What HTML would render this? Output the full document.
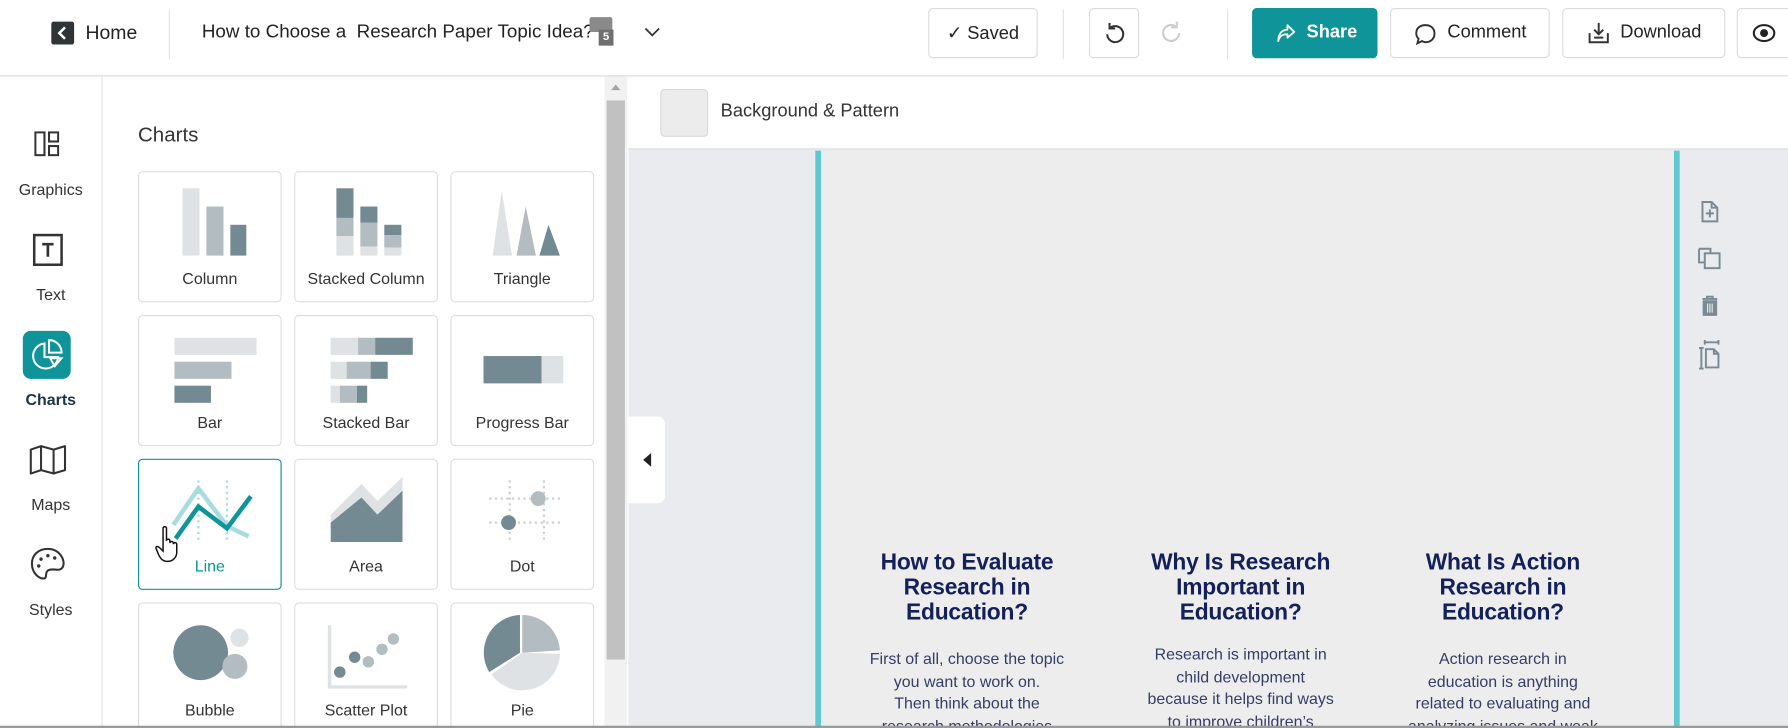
<!DOCTYPE html>
<html><head><meta charset="utf-8"><style>
*{box-sizing:border-box;margin:0;padding:0}
html,body{width:1788px;height:728px;overflow:hidden;background:#fff;font-family:"Liberation Sans",sans-serif}
#w{position:absolute;left:0;top:0;width:1568px;height:638px;transform:scale(1.14031,1.14107);transform-origin:0 0;overflow:hidden;background:#fff}
.a{position:absolute}
.btn{position:absolute;top:7px;height:44px;border:1px solid #dcdcdc;border-radius:4px;background:#fff;display:flex;align-items:center;justify-content:center;font-size:16px;color:#222;gap:8px}
.vd{position:absolute;top:8px;width:1px;height:44px;background:#e3e3e3}
.rail{position:absolute;left:0;width:89px;text-align:center;font-size:14px;color:#333}
.card{position:absolute;width:126px;height:115px;border:1px solid #dedede;border-radius:4px;background:#fff}
.card .l{position:absolute;left:0;right:0;top:85px;text-align:center;font-size:14px;color:#333}
.card svg{position:absolute;left:0;top:0}
.h{position:absolute;width:200px;text-align:center;font-size:20px;line-height:22px;font-weight:bold;color:#14205a;letter-spacing:-.2px}
.p{position:absolute;width:200px;text-align:center;font-size:14px;line-height:19.5px;color:#353c66}
</style></head><body><div id="w">
<!-- top bar -->
<div class="a" style="left:0;top:66px;width:1568px;height:1px;background:#d9d9d9"></div>
<div class="a" style="left:45px;top:19px;width:20px;height:20px;background:#2f3537;border-radius:2px"></div>
<svg class="a" style="left:45px;top:19px" width="20" height="20"><path d="M12 5 L7 10 L12 15" stroke="#fff" stroke-width="2.2" fill="none"/></svg>
<div class="a" style="left:75px;top:19px;font-size:17px;color:#222">Home</div>
<div class="vd" style="left:148px"></div>
<div class="a" style="left:177px;top:19px;font-size:16.5px;color:#222;white-space:pre">How to Choose a  Research Paper Topic Idea?</div>
<div class="a" style="left:517px;top:15px;width:20px;height:13px;background:#8a8a8a;border-radius:2px"></div>
<div class="a" style="left:525px;top:26px;width:13px;height:14px;background:#6f6f6f;color:#fff;font-size:10px;font-weight:bold;text-align:center;line-height:14px">5</div>
<svg class="a" style="left:565px;top:22px" width="14" height="12"><path d="M1 3 L7 9 L13 3" stroke="#333" stroke-width="1.6" fill="none"/></svg>
<div class="btn" style="left:814px;width:96px">✓ Saved</div>
<div class="vd" style="left:932px"></div>
<div class="btn" style="left:955px;width:44px"><svg width="22" height="22"><path d="M7 7 A7 7 0 1 1 5 12" stroke="#333" stroke-width="1.8" fill="none"/><path d="M7 2 V7 H12" stroke="#333" stroke-width="1.8" fill="none"/></svg></div>
<div class="a" style="left:1017px;top:17px"><svg width="22" height="22"><path d="M15 7 A7 7 0 1 0 17 12" stroke="#ccc" stroke-width="1.8" fill="none"/><path d="M15 2 V7 H10" stroke="#ccc" stroke-width="1.8" fill="none"/></svg></div>
<div class="vd" style="left:1076px"></div>
<div class="btn" style="left:1098px;width:110px;background:#0e9499;border-color:#0e9499;color:#fff;font-weight:bold"><svg width="22" height="22"><path d="M13 4 L19 10 L13 15 V12 C8 12 6 14 5 18 C5 12 8 8 13 8 Z" stroke="#fff" stroke-width="1.6" fill="none" stroke-linejoin="round"/></svg>Share</div>
<div class="btn" style="left:1219px;width:140px"><svg width="22" height="22"><path d="M11 4 C6 4 3 7 3 11 C3 13 4 15 5 16 L4 20 L8 18 C9 18.5 10 19 11 19 C16 19 19 15.5 19 11.5 C19 7 16 4 11 4 Z" stroke="#333" stroke-width="1.7" fill="none"/></svg>Comment</div>
<div class="btn" style="left:1370px;width:143px"><svg width="22" height="22"><path d="M11 2 V12 M7 8 L11 12 L15 8 M3 11 V19 H19 V11 M7 15 H15" stroke="#333" stroke-width="1.7" fill="none"/></svg>Download</div>
<div class="btn" style="left:1523px;width:60px;justify-content:flex-start;padding-left:12px"><svg width="22" height="22"><ellipse cx="11" cy="11" rx="9" ry="7" stroke="#222" stroke-width="1.8" fill="none"/><circle cx="11" cy="11" r="3.5" fill="#222"/></svg></div>
<!-- left rail -->
<div class="a" style="left:89px;top:67px;width:1px;height:571px;background:#e2e2e2"></div>
<svg class="a" style="left:30px;top:115px" width="22" height="22"><rect x="1" y="1" width="8" height="20" stroke="#333" stroke-width="1.8" fill="none"/><rect x="13" y="1" width="8" height="8" stroke="#333" stroke-width="1.8" fill="none"/><rect x="13" y="13" width="8" height="8" stroke="#333" stroke-width="1.8" fill="none"/></svg>
<div class="rail" style="top:158px">Graphics</div>
<svg class="a" style="left:26px;top:203px" width="32" height="32"><rect x="4" y="3" width="24" height="26" stroke="#333" stroke-width="2.2" fill="none"/><path d="M11 11 H21 M16 11 V22" stroke="#333" stroke-width="2.4"/></svg>
<div class="rail" style="top:250px">Text</div>
<div class="a" style="left:20px;top:290px;width:42px;height:42px;background:#0e9499;border-radius:7px"></div>
<svg class="a" style="left:20px;top:290px" width="42" height="42"><path d="M19 11 A11 11 0 1 0 31 23 H19 Z" stroke="#fff" stroke-width="1.8" fill="none"/><path d="M23 8 A11 11 0 0 1 34 19 H23 Z" stroke="#fff" stroke-width="1.8" fill="none"/><path d="M24 24 H34 L28 31 Z" stroke="#fff" stroke-width="1.6" fill="none"/></svg>
<div class="rail" style="top:342px;font-weight:bold;color:#1b3545">Charts</div>
<svg class="a" style="left:25px;top:389px" width="34" height="28"><path d="M2 5 L11 2 L22 5 L32 2 V23 L22 26 L11 23 L2 26 Z M11 2 V23 M22 5 V26" stroke="#333" stroke-width="1.8" fill="none" stroke-linejoin="round"/></svg>
<div class="rail" style="top:434px">Maps</div>
<svg class="a" style="left:25px;top:478px" width="34" height="32"><path d="M17 3 C8 3 3 9 3 16 C3 24 9 29 13 29 C17 29 14 24 17 22 C21 19 27 24 30 19 C33 13 27 3 17 3 Z" stroke="#333" stroke-width="1.8" fill="none"/><circle cx="11" cy="12" r="1.5" fill="#333"/><circle cx="17" cy="9" r="1.5" fill="#333"/><circle cx="23" cy="11" r="1.5" fill="#333"/><circle cx="9" cy="18" r="1.5" fill="#333"/></svg>
<div class="rail" style="top:526px">Styles</div>
<!-- panel -->
<div class="a" style="left:121px;top:108px;font-size:18px;color:#333">Charts</div>
<div class="a" style="left:530px;top:67px;width:20px;height:571px;background:#f1f1f1"></div>
<div class="a" style="left:532px;top:88px;width:16px;height:490px;background:#c1c1c1"></div>
<svg class="a" style="left:535px;top:72px" width="10" height="8"><path d="M1 7 L5 2 L9 7 Z" fill="#a3a3a3"/></svg>

<div class="card" style="left:121px;top:150px"><svg width="126" height="85"><rect x="38" y="14" width="15" height="59" fill="#dfe2e4"/><rect x="59" y="30" width="15" height="43" fill="#b3bcc1"/><rect x="80" y="46" width="14" height="27" fill="#748a93"/></svg><div class="l">Column</div></div>
<div class="card" style="left:258px;top:150px"><svg width="126" height="85"><rect x="36" y="14" width="15" height="26" fill="#748a93"/><rect x="36" y="40" width="15" height="16" fill="#b3bcc1"/><rect x="36" y="56" width="15" height="17" fill="#dfe2e4"/><rect x="57" y="30" width="15" height="14" fill="#748a93"/><rect x="57" y="44" width="15" height="21" fill="#b3bcc1"/><rect x="57" y="65" width="15" height="8" fill="#dfe2e4"/><rect x="78" y="46" width="15" height="9" fill="#748a93"/><rect x="78" y="55" width="15" height="11" fill="#b3bcc1"/><rect x="78" y="66" width="15" height="7" fill="#dfe2e4"/></svg><div class="l">Stacked Column</div></div>
<div class="card" style="left:395px;top:150px"><svg width="126" height="85"><path d="M36 73 L44 16 L53 73 Z" fill="#dfe2e4"/><path d="M57 73 L65 30 L74 73 Z" fill="#b3bcc1"/><path d="M77 73 L85 46 L95 73 Z" fill="#748a93"/></svg><div class="l">Triangle</div></div>

<div class="card" style="left:121px;top:276px"><svg width="126" height="85"><rect x="31" y="19" width="72" height="15" fill="#dfe2e4"/><rect x="31" y="40" width="50" height="15" fill="#b3bcc1"/><rect x="31" y="61" width="32" height="15" fill="#748a93"/></svg><div class="l">Bar</div></div>
<div class="card" style="left:258px;top:276px"><svg width="126" height="85"><rect x="31" y="19" width="24" height="15" fill="#dfe2e4"/><rect x="55" y="19" width="15" height="15" fill="#b3bcc1"/><rect x="70" y="19" width="33" height="15" fill="#748a93"/><rect x="31" y="40" width="14" height="15" fill="#dfe2e4"/><rect x="45" y="40" width="21" height="15" fill="#b3bcc1"/><rect x="66" y="40" width="15" height="15" fill="#748a93"/><rect x="31" y="61" width="8" height="15" fill="#dfe2e4"/><rect x="39" y="61" width="15" height="15" fill="#b3bcc1"/><rect x="54" y="61" width="9" height="15" fill="#748a93"/></svg><div class="l">Stacked Bar</div></div>
<div class="card" style="left:395px;top:276px"><svg width="126" height="85"><rect x="28" y="35" width="51" height="24" fill="#748a93"/><rect x="79" y="35" width="19" height="24" fill="#dfe2e4"/></svg><div class="l">Progress Bar</div></div>

<div class="card" style="left:121px;top:402px;border-color:#0e9499"><svg width="126" height="85"><path d="M52 18 V70 M77 18 V70" stroke="#a8dcdf" stroke-width="2" stroke-dasharray="2 3"/><path d="M30 57 L52 25 L77 58 L96 67" stroke="#a8dcdf" stroke-width="4" fill="none"/><path d="M32 69 L52 41 L77 60 L98 32" stroke="#0e9499" stroke-width="4" fill="none"/></svg><div class="l" style="color:#0e9499">Line</div></div>
<div class="card" style="left:258px;top:402px"><svg width="126" height="85"><path d="M31 48 L58 21 L72 36 L94 15 V45 L72 55 L58 40 L31 55 Z" fill="#dfe2e4"/><path d="M31 72 V55 L58 33 L72 48 L94 27 V72 Z" fill="#748a93"/></svg><div class="l">Area</div></div>
<div class="card" style="left:395px;top:402px"><svg width="126" height="85"><path d="M51 18 V70 M81 18 V70 M33 34 H98 M33 55 H98" stroke="#ccd1d4" stroke-width="2" stroke-dasharray="2 3"/><circle cx="76" cy="34" r="6.5" fill="#b3bcc1"/><circle cx="50" cy="55" r="6.5" fill="#748a93"/></svg><div class="l">Dot</div></div>

<div class="card" style="left:121px;top:528px"><svg width="126" height="85"><circle cx="54" cy="43" r="24" fill="#748a93"/><circle cx="88" cy="30" r="8" fill="#dfe2e4"/><circle cx="84" cy="55" r="11" fill="#b3bcc1"/></svg><div class="l">Bubble</div></div>
<div class="card" style="left:258px;top:528px"><svg width="126" height="85"><path d="M30 19 V73 H98" stroke="#dfe2e4" stroke-width="3" fill="none"/><circle cx="39" cy="60" r="5" fill="#748a93"/><circle cx="52" cy="47" r="5" fill="#748a93"/><circle cx="64" cy="51" r="5" fill="#b3bcc1"/><circle cx="76" cy="40" r="5" fill="#b3bcc1"/><circle cx="86" cy="31" r="5" fill="#b3bcc1"/></svg><div class="l">Scatter Plot</div></div>
<div class="card" style="left:395px;top:528px"><svg width="126" height="85"><path d="M62 43 V10 A33 33 0 0 1 95 41 Z" fill="#b3bcc1"/><path d="M62 43 L95 44 A33 33 0 0 1 35 62 Z" fill="#dfe2e4"/><path d="M60 43 L33 60 A33 33 0 0 1 60 10 Z" fill="#748a93"/></svg><div class="l">Pie</div></div>

<!-- canvas -->
<div class="a" style="left:551px;top:67px;width:1017px;height:571px;background:#e9ebee"></div>
<div class="a" style="left:551px;top:67px;width:1017px;height:64px;background:#fff;border-bottom:1px solid #dcdcdc"></div>
<div class="a" style="left:579px;top:78px;width:42px;height:42px;background:#ececec;border:1px solid #d9d9d9;border-radius:4px"></div>
<div class="a" style="left:632px;top:89px;font-size:16px;color:#333">Background &amp; Pattern</div>
<div class="a" style="left:715px;top:132px;width:758px;height:506px;background:#ededed;border-left:5px solid #5ec9cf;border-right:5px solid #5ec9cf"></div>
<div class="a" style="left:551px;top:365px;width:32px;height:76px;background:#fff;border-radius:0 6px 6px 0"></div>
<svg class="a" style="left:561px;top:396px" width="12" height="14"><path d="M10 1 L3 7 L10 13 Z" fill="#222"/></svg>
<svg class="a" style="left:1488px;top:175px" width="24" height="150" fill="none" stroke="#7b8a92" stroke-width="1.7"><path d="M5 2 H13 L18 7 V19 H5 Z M13 2 V7 H18 M8 12 H15 M11.5 8.5 V15.5"/><path d="M2 43 V55 H7 M2 43 H12 V47"/><rect x="7" y="47" width="13" height="13"/><path d="M5 87 H18 M9 87 V85 H14 V87" /><path d="M6 89 H17 V101 H6 Z" fill="#7b8a92"/><path d="M9.5 91 V99 M11.5 91 V99 M13.5 91 V99" stroke="#e9ebee" stroke-width="1"/><path d="M4 130 V148 M2 130 H6 M2 148 H6 M7 125 H19 M7 123 V127 M19 123 V127 M8 131 H15 L19 135 V147 H8 Z M15 131 V135 H19"/></svg>
<div class="h" style="left:748px;top:482px">How to Evaluate<br>Research in<br>Education?</div>
<div class="p" style="left:748px;top:568px">First of all, choose the topic<br>you want to work on.<br>Then think about the<br>research methodologies</div>
<div class="h" style="left:988px;top:482px">Why Is Research<br>Important in<br>Education?</div>
<div class="p" style="left:988px;top:564px">Research is important in<br>child development<br>because it helps find ways<br>to improve children’s</div>
<div class="h" style="left:1218px;top:482px">What Is Action<br>Research in<br>Education?</div>
<div class="p" style="left:1218px;top:568px">Action research in<br>education is anything<br>related to evaluating and<br>analyzing issues and weak</div>
<div class="a" style="left:0;top:636px;width:1568px;height:2px;background:#9a9a9a"></div>
<!-- cursor -->
<svg class="a" style="left:135px;top:460px" width="26" height="34"><path d="M8 3 C8 1 11 1 11 3 V14 C11 12 14 12 14 14 V16 C14 14 17 14 17 16 V17 C17 15 20 15 20 17 V24 C20 28 17 32 12 32 C8 32 6 30 4 26 L2 21 C1 19 3 18 5 20 L8 23 Z" fill="#fff" stroke="#111" stroke-width="1.3"/></svg>
</div></body></html>
